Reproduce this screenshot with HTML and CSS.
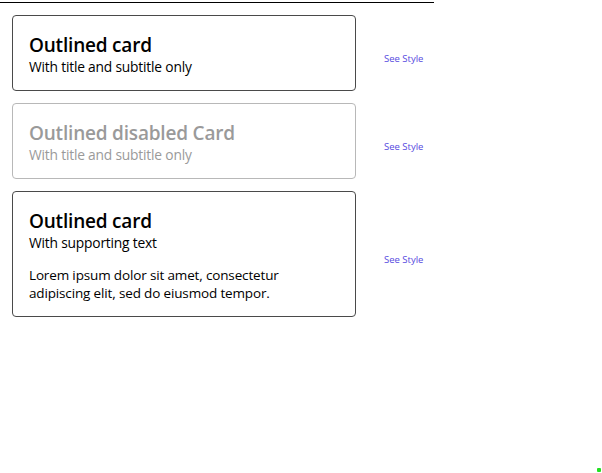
FILE: index.html
```html
<!DOCTYPE html>
<html>
<head>
<meta charset="utf-8">
<link rel="stylesheet" href="styles.css">
</head>
<body>
<div class="topline"></div>
<div class="list">
  <div class="row">
    <div class="card">
      <div class="title">Outlined card</div>
      <div class="subtitle">With title and subtitle only</div>
    </div>
    <a class="link" href="#">See Style</a>
  </div>
  <div class="row">
    <div class="card disabled">
      <div class="title">Outlined disabled Card</div>
      <div class="subtitle">With title and subtitle only</div>
    </div>
    <a class="link" href="#">See Style</a>
  </div>
  <div class="row">
    <div class="card">
      <div class="title">Outlined card</div>
      <div class="subtitle">With supporting text</div>
      <div class="body">Lorem ipsum dolor sit amet, consectetur adipiscing elit, sed do eiusmod tempor.</div>
    </div>
    <a class="link" href="#">See Style</a>
  </div>
</div>
<div class="dot"></div>
</body>
</html>
```
FILE: styles.css
```css
html, body {
  margin: 0;
  padding: 0;
  background: #ffffff;
  font-family: "Open Sans", "Noto Sans", sans-serif;
  color: #000;
}
body {
  width: 602px;
  height: 473px;
  position: relative;
  overflow: hidden;
}
.topline {
  width: 434px;
  height: 1px;
  background: #000;
  margin-top: 2px;
}
.list {
  display: flex;
  flex-direction: column;
  gap: 12px;
  padding: 12px 0 0 12px;
}
.row {
  display: flex;
  align-items: center;
  gap: 28px;
}
.card {
  box-sizing: border-box;
  width: 344px;
  border: 1px solid #4a4a4a;
  border-radius: 4px;
  padding: 17px 16px 13px 16px;
}
.card.disabled {
  border-color: #b8b8b8;
}
.card.disabled .title,
.card.disabled .subtitle {
  color: #9a9a9a;
}
.title {
  font-size: 19px;
  font-weight: 600;
  line-height: 24px;
  letter-spacing: -0.2px;
}
.subtitle {
  font-size: 13.8px;
  line-height: 20px;
  letter-spacing: -0.2px;
}
.body {
  margin-top: 13px;
  margin-bottom: 1px;
  font-size: 13.5px;
  line-height: 18px;
  letter-spacing: -0.15px;
}
.link {
  margin-top: 11px;
  font-size: 9.5px;
  color: #5548e0;
  text-decoration: none;
}
.dot {
  position: absolute;
  left: 597px;
  top: 468px;
  width: 4px;
  height: 4px;
  border-radius: 1px;
  background: #22e022;
}
```
